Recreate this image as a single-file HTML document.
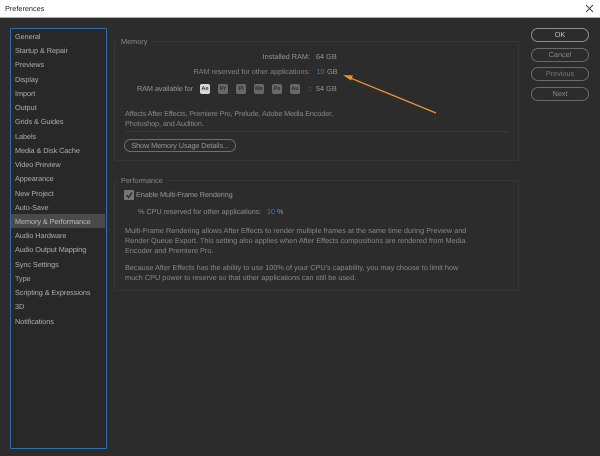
<!DOCTYPE html>
<html><head><meta charset="utf-8">
<style>
html,body{margin:0;padding:0;width:600px;height:456px;overflow:hidden;background:#2c2c2c}
#w{position:absolute;left:0;top:0;width:600px;height:456px;overflow:hidden;background:#2c2c2c;font-family:"Liberation Sans",sans-serif;font-size:7.3px;color:#979797;text-rendering:geometricPrecision;filter:blur(0.35px)}
div{position:absolute;box-sizing:border-box}
.t{white-space:nowrap;line-height:10px;height:10px}
.s{left:15px;color:#aeaeae;letter-spacing:-0.07px}
.d{left:125px;color:#888}
.b{left:531px;width:58px;height:14px;border:1px solid #6a6a6a;border-radius:7px;text-align:center;line-height:11px;color:#8a8a8a}
.g{top:84px;width:10px;height:10px;border-radius:2px;background:#686868;color:#2c2c2c;font-size:5.6px;line-height:10px;text-align:center;font-weight:bold}
.f{border:1px solid #363636;border-radius:2px}
.l{background:#2c2c2c;padding:0 4px;color:#8a8a8a}
</style></head><body><div id="w">
<div style="left:0;top:0;width:600px;height:18px;background:#fff;border-bottom:1px solid #aaa"></div>
<div class="t" style="left:5px;top:4px;color:#222;font-size:7.3px">Preferences</div>
<svg style="position:absolute;left:585px;top:4px" width="9" height="9"><path d="M1 1L8 8M8 1L1 8" stroke="#444" stroke-width="1" fill="none"/></svg>

<div style="left:10px;top:28px;width:97px;height:421px;background:#282828;border:1px solid #2f6ea8;border-radius:1px"></div>
<div style="left:11px;top:214px;width:94px;height:14px;background:#4a4a4a"></div>
<div class="t s" style="top:31.5px">General</div>
<div class="t s" style="top:45.5px">Startup &amp; Repair</div>
<div class="t s" style="top:60px">Previews</div>
<div class="t s" style="top:74.5px">Display</div>
<div class="t s" style="top:88.5px">Import</div>
<div class="t s" style="top:103px">Output</div>
<div class="t s" style="top:117px">Grids &amp; Guides</div>
<div class="t s" style="top:131.5px">Labels</div>
<div class="t s" style="top:145.5px">Media &amp; Disk Cache</div>
<div class="t s" style="top:160px">Video Preview</div>
<div class="t s" style="top:174px">Appearance</div>
<div class="t s" style="top:188.5px">New Project</div>
<div class="t s" style="top:202.5px">Auto-Save</div>
<div class="t s" style="top:216.5px;color:#bcbcbc">Memory &amp; Performance</div>
<div class="t s" style="top:231px">Audio Hardware</div>
<div class="t s" style="top:245px">Audio Output Mapping</div>
<div class="t s" style="top:259.5px">Sync Settings</div>
<div class="t s" style="top:273.5px">Type</div>
<div class="t s" style="top:288px">Scripting &amp; Expressions</div>
<div class="t s" style="top:302px">3D</div>
<div class="t s" style="top:316.5px">Notifications</div>

<div class="f" style="left:114px;top:41px;width:405px;height:120px"></div>
<div class="t l" style="left:117px;top:37px">Memory</div>
<div class="t" style="right:290px;top:52px">Installed RAM:</div>
<div class="t" style="left:316px;top:52px">64 GB</div>
<div class="t" style="right:290px;top:66.5px;color:#848484;letter-spacing:-0.05px">RAM reserved for other applications:</div>
<div class="t" style="left:316.5px;top:66.5px;color:#2d7fd0">10</div>
<div class="t" style="left:327px;top:66.5px">GB</div>
<div class="t" style="left:137px;top:84px;letter-spacing:-0.1px">RAM available for</div>
<div class="g" style="left:200px;background:#d8d8d8;color:#333">Ae</div>
<div class="g" style="left:218px">Pr</div>
<div class="g" style="left:236px">Pl</div>
<div class="g" style="left:254px">Me</div>
<div class="g" style="left:272px">Ps</div>
<div class="g" style="left:290px">Au</div>
<div class="t" style="left:309px;top:84px">:</div>
<div class="t" style="left:316px;top:84px">54 GB</div>
<div class="t d" style="top:108.5px;letter-spacing:-0.14px">Affects After Effects, Premiere Pro, Prelude, Adobe Media Encoder,</div>
<div class="t d" style="top:118.5px;letter-spacing:-0.1px">Photoshop, and Audition.</div>
<div style="left:125px;top:131px;width:384px;height:1px;background:#383838"></div>
<div class="t" style="left:124px;top:139px;width:112px;height:13px;border:1px solid #6e6e6e;border-radius:7px;text-align:center;line-height:11px;letter-spacing:-0.1px">Show Memory Usage Details...</div>

<div class="f" style="left:114px;top:180px;width:405px;height:111px"></div>
<div class="t l" style="left:117px;top:175.5px">Performance</div>
<div style="left:124px;top:190px;width:10px;height:10px;background:#777;border-radius:1px"></div>
<svg style="position:absolute;left:124px;top:190px" width="10" height="10"><path d="M2.5 5L4.5 7.5L8 2.5" stroke="#222" stroke-width="1.2" fill="none"/></svg>
<div class="t" style="left:136px;top:189.5px;letter-spacing:-0.1px">Enable Multi-Frame Rendering</div>
<div class="t" style="left:138px;top:207px;color:#8c8c8c;letter-spacing:-0.08px">% CPU reserved for other applications:</div>
<div class="t" style="left:267px;top:207px;color:#2d7fd0">10</div>
<div class="t" style="left:277px;top:207px">%</div>
<div class="t d" style="top:225.5px">Multi-Frame Rendering allows After Effects to render multiple frames at the same time during Preview and</div>
<div class="t d" style="top:235.5px">Render Queue Export. This setting also applies when After Effects compositions are rendered from Media</div>
<div class="t d" style="top:245.5px">Encoder and Premiere Pro.</div>
<div class="t d" style="top:262.5px">Because After Effects has the ability to use 100% of your CPU's capability, you may choose to limit how</div>
<div class="t d" style="top:272.5px">much CPU power to reserve so that other applications can still be used.</div>

<div style="left:525px;top:18px;width:1px;height:438px;background:#303030"></div>
<div class="t b" style="top:28px;color:#c0c0c0;border-color:#8c8c8c">OK</div>
<div class="t b" style="top:48px">Cancel</div>
<div class="t b" style="top:67px;color:#777">Previous</div>
<div class="t b" style="top:87px">Next</div>

<svg style="position:absolute;left:0;top:0" width="600" height="456">
<path d="M436 113L348 77" stroke="#e8922e" stroke-width="1.3" fill="none"/>
<path d="M343 75L353 75.5L351 80.5Z" fill="#e8922e"/>
</svg>
</div></body></html>
